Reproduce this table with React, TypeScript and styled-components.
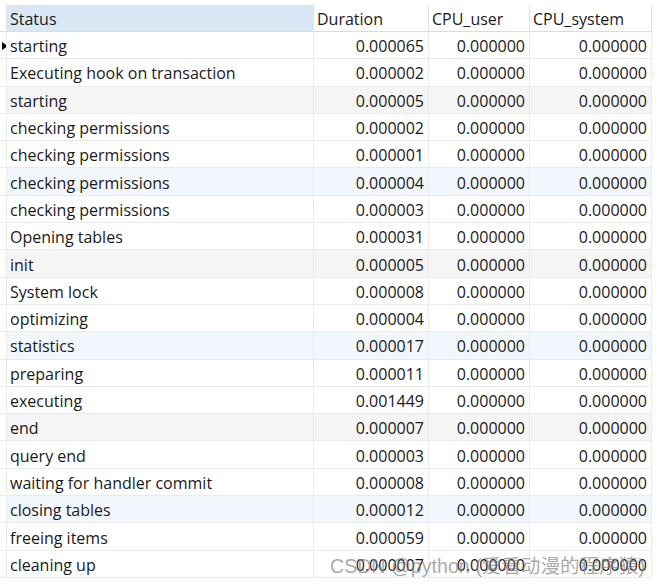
import React from "react";
import styled, { createGlobalStyle } from "styled-components";

const Global = createGlobalStyle`
  html, body { margin: 0; padding: 0; background: #ffffff; }
  body { font-family: "Open Sans", "Noto Sans", "Noto Sans CJK SC", sans-serif; }
`;

const Page = styled.div`
  position: relative;
  width: 662px;
  height: 585px;
  padding-top: 5px;
  box-sizing: border-box;
  overflow: hidden;
`;

const Grid = styled.div`
  display: grid;
  grid-template-columns: 7px 307px 115px 101px 122px;
  width: 652px;
`;

const HeadCell = styled.div<{ $active?: boolean; $gutter?: boolean }>`
  height: 27px;
  box-sizing: border-box;
  background: ${(p) => (p.$active ? "#dae8f6" : "#ffffff")};
  border-right: 1px solid #e3e3e3;
  border-bottom: 1px solid #dcdcdc;
  font-size: 16px;
  line-height: 26px;
  padding-top: 1px;
  color: #1a1a1a;
  padding-left: ${(p) => (p.$gutter ? 0 : 3)}px;
  white-space: nowrap;
  overflow: hidden;
`;

const Cell = styled.div<{ $bg: string; $num?: boolean; $gutter?: boolean }>`
  height: 27.3px;
  box-sizing: border-box;
  background: ${(p) => (p.$gutter ? "#ffffff" : p.$bg)};
  border-right: 1px solid #ebebeb;
  border-bottom: 1px solid #ebebeb;
  font-size: 16px;
  line-height: 26px;
  color: #1a1a1a;
  padding: 2px ${(p) => (p.$num ? 4 : 0)}px 0 ${(p) => (p.$num ? 0 : 3)}px;
  white-space: nowrap;
  overflow: hidden;
  display: flex;
  align-items: center;
  justify-content: ${(p) => (p.$num ? "flex-end" : "flex-start")};
`;

const Pointer = styled.div`
  width: 0;
  height: 0;
  border-top: 4px solid transparent;
  border-bottom: 4px solid transparent;
  border-left: 6px solid #000000;
  margin-left: -1px;
`;

const Watermark = styled.div`
  position: absolute;
  left: 330px;
  top: 553px;
  font-family: "Liberation Sans", "Noto Sans CJK SC", sans-serif;
  font-size: 19.6px;
  line-height: 26px;
  color: rgba(130, 130, 130, 0.7);
  white-space: nowrap;
  pointer-events: none;
`;

const rows: [string, string][] = [
  ["starting", "0.000065"],
  ["Executing hook on transaction", "0.000002"],
  ["starting", "0.000005"],
  ["checking permissions", "0.000002"],
  ["checking permissions", "0.000001"],
  ["checking permissions", "0.000004"],
  ["checking permissions", "0.000003"],
  ["Opening tables", "0.000031"],
  ["init", "0.000005"],
  ["System lock", "0.000008"],
  ["optimizing", "0.000004"],
  ["statistics", "0.000017"],
  ["preparing", "0.000011"],
  ["executing", "0.001449"],
  ["end", "0.000007"],
  ["query end", "0.000003"],
  ["waiting for handler commit", "0.000008"],
  ["closing tables", "0.000012"],
  ["freeing items", "0.000059"],
  ["cleaning up", "0.000007"],
];

function rowBg(i: number): string {
  const n = i + 1;
  if (n % 6 === 0) return "#f2f7fd";
  if (n % 3 === 0) return "#f5f5f5";
  return "#ffffff";
}

export default function App() {
  return (
    <Page>
      <Global />
      <Grid>
        <HeadCell $gutter />
        <HeadCell $active>Status</HeadCell>
        <HeadCell>Duration</HeadCell>
        <HeadCell>CPU_user</HeadCell>
        <HeadCell>CPU_system</HeadCell>
        {rows.map(([status, dur], i) => {
          const bg = rowBg(i);
          return (
            <React.Fragment key={i}>
              <Cell $bg={bg} $gutter>
                {i === 0 ? <Pointer /> : null}
              </Cell>
              <Cell $bg={bg}>{status}</Cell>
              <Cell $bg={bg} $num>{dur}</Cell>
              <Cell $bg={bg} $num>0.000000</Cell>
              <Cell $bg={bg} $num>0.000000</Cell>
            </React.Fragment>
          );
        })}
      </Grid>
      <Watermark>CSDN @python (爱看动漫的程序猿)</Watermark>
    </Page>
  );
}
